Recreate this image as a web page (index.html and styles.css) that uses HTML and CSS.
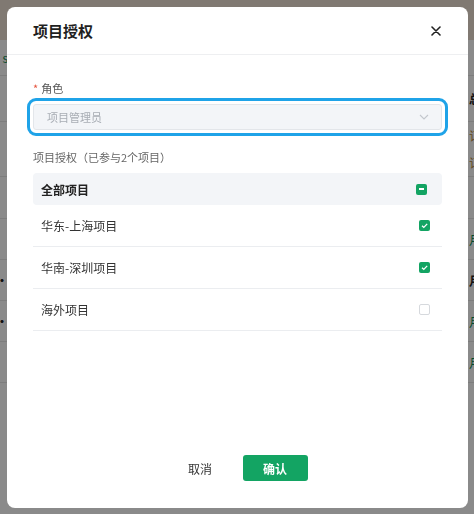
FILE: index.html
```html
<!DOCTYPE html>
<html lang="zh-CN">
<head>
    <meta charset="UTF-8">
    <meta name="viewport" content="width=device-width, initial-scale=1.0">
    <title>项目授权</title>
    <link rel="stylesheet" href="styles.css">
</head>
<body>
    <div class="page">
        <div class="bg-row top"></div>
        <div class="bg-row h35"><span class="l green">s</span><span class="r"></span></div>
        <div class="bg-row h45"><span class="l"></span><span class="r dark">总</span></div>
        <div class="bg-row h26"><span class="l"></span><span class="r brown">订</span></div>
        <div class="bg-row h28"><span class="l"></span><span class="r brown">订</span></div>
        <div class="bg-row h41"></div>
        <div class="bg-row h40"><span class="l"></span><span class="r green">月</span></div>
        <div class="bg-row h40"><span class="l dark">入口·</span><span class="r dark">月</span></div>
        <div class="bg-row h40"><span class="l dark">入口·</span><span class="r green">月</span></div>
        <div class="bg-row h40"><span class="l"></span><span class="r green">月</span></div>
    </div>

    <div class="mask">
        <div class="modal">
            <div class="modal-header">
                <span class="modal-title">项目授权</span>
                <svg class="close" width="10" height="10" viewBox="0 0 10 10">
                    <path d="M1 1L9 9M9 1L1 9" stroke="#222" stroke-width="1.6" stroke-linecap="round"/>
                </svg>
            </div>
            <div class="modal-body">
                <div class="field-label"><span class="req">*</span>角色</div>
                <div class="select">
                    <span>项目管理员</span>
                    <svg width="10" height="6" viewBox="0 0 10 6">
                        <path d="M1 1L5 5L9 1" stroke="#c3c7cd" stroke-width="1.1" fill="none"/>
                    </svg>
                </div>
                <div class="section-label">项目授权（已参与2个项目）</div>
                <div class="project-list">
                    <div class="project-head">
                        <span>全部项目</span>
                        <span class="check half"></span>
                    </div>
                    <div class="project-row">
                        <span>华东-上海项目</span>
                        <span class="check on">
                            <svg width="11" height="11" viewBox="0 0 11 11"><path d="M3 5.7L4.8 7.4L8.2 3.9" stroke="#fff" stroke-width="1.3" fill="none"/></svg>
                        </span>
                    </div>
                    <div class="project-row">
                        <span>华南-深圳项目</span>
                        <span class="check on">
                            <svg width="11" height="11" viewBox="0 0 11 11"><path d="M3 5.7L4.8 7.4L8.2 3.9" stroke="#fff" stroke-width="1.3" fill="none"/></svg>
                        </span>
                    </div>
                    <div class="project-row">
                        <span>海外项目</span>
                        <span class="check off"></span>
                    </div>
                </div>
            </div>
            <div class="modal-footer">
                <button class="btn cancel">取消</button>
                <button class="btn ok">确认</button>
            </div>
        </div>
    </div>
</body>
</html>
```
FILE: styles.css
```css
body {
    margin: 0;
    padding: 0;
    width: 474px;
    height: 514px;
    overflow: hidden;
    font-family: "Noto Sans CJK SC", "Noto Sans", sans-serif;
    background: #fff;
}
.page {
    display: flex;
    flex-direction: column;
}
.bg-row {
    display: flex;
    justify-content: space-between;
    align-items: center;
    border-bottom: 1px solid #e8e8e8;
    font-size: 12px;
}
.bg-row.top {
    height: 40px;
    background: #ede0d2;
    border-bottom: none;
}
.h26 { height: 26px; border-bottom: none; }
.h28 { height: 28px; }
.h35 { height: 35px; }
.h40 { height: 40px; }
.h41 { height: 41px; }
.h45 { height: 45px; }
.bg-row .l {
    width: 8px;
    display: flex;
    justify-content: flex-end;
    overflow: hidden;
    white-space: nowrap;
}
.bg-row .r {
    width: 5px;
    overflow: hidden;
    white-space: nowrap;
}
.green { color: #0c8a52; }
.dark { color: #222; font-weight: 600; }
.brown { color: #b5853c; }

.mask {
    position: fixed;
    top: 0;
    left: 0;
    right: 0;
    bottom: 0;
    background: rgba(0, 0, 0, 0.46);
    display: flex;
    padding: 7px 6px 6px 7px;
}
.modal {
    flex: 1;
    background: #fff;
    border-radius: 8px;
    display: flex;
    flex-direction: column;
}
.modal-header {
    height: 47px;
    padding: 0 27px 0 26px;
    display: flex;
    align-items: center;
    justify-content: space-between;
    border-bottom: 1px solid #eeeff1;
}
.modal-title {
    font-size: 15px;
    font-weight: 600;
    color: #1f1f1f;
}
.modal-body {
    padding: 25px 26px 0 26px;
}
.field-label {
    font-size: 11px;
    line-height: 16px;
    color: #555;
}
.req {
    color: #e5533d;
    margin-right: 3px;
}
.select {
    margin-top: 8px;
    height: 24px;
    padding: 0 12px 0 13px;
    background: #f3f5f8;
    border: 1px solid #e3e6ea;
    border-radius: 3px;
    outline: 3px solid #1fa3e8;
    outline-offset: 3px;
    display: flex;
    align-items: center;
    justify-content: space-between;
    font-size: 11px;
    color: #a8adb4;
}
.section-label {
    margin-top: 19px;
    font-size: 11px;
    line-height: 16px;
    color: #666;
}
.project-list {
    margin-top: 8px;
}
.project-head {
    height: 32px;
    padding: 0 15px 0 8px;
    background: #f3f5f8;
    border-radius: 4px;
    display: flex;
    align-items: center;
    justify-content: space-between;
    font-size: 12px;
    font-weight: 600;
    color: #222;
}
.project-row {
    height: 41px;
    padding: 0 12px 0 8px;
    border-bottom: 1px solid #ebedf0;
    display: flex;
    align-items: center;
    justify-content: space-between;
    font-size: 12px;
    color: #333;
}
.check {
    width: 11px;
    height: 11px;
    border-radius: 2px;
    box-sizing: border-box;
    display: flex;
    align-items: center;
    justify-content: center;
}
.check.on,
.check.half {
    background: #13a463;
}
.check.half::after {
    content: "";
    width: 5px;
    height: 1.5px;
    background: #fff;
}
.check.off {
    border: 1px solid #d6d9dd;
    background: #fff;
}
.modal-footer {
    margin-top: auto;
    padding-bottom: 27px;
    display: flex;
    justify-content: center;
    gap: 10px;
}
.btn {
    width: 65px;
    height: 26px;
    border: none;
    border-radius: 3px;
    font-family: inherit;
    font-size: 12px;
    padding: 0;
    cursor: pointer;
}
.btn.cancel {
    background: transparent;
    color: #333;
}
.btn.ok {
    background: #13a463;
    color: #fff;
    font-weight: 600;
}
```
